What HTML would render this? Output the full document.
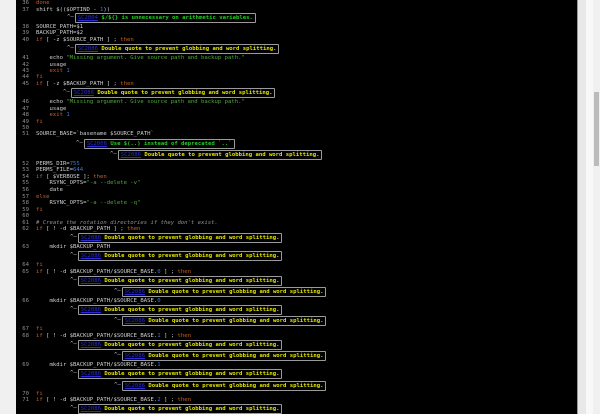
<!DOCTYPE html>
<html><head><meta charset="utf-8"><style>
body{margin:0;width:600px;height:414px;overflow:hidden;background:#f0f0f0;position:relative;font-family:"DejaVu Sans Mono","Liberation Mono",monospace;}
#panel{position:absolute;left:16px;top:0;width:561px;height:414px;background:#000;}
#b1{position:absolute;left:577px;top:0;width:1px;height:414px;background:#999;}
#b2{position:absolute;left:578px;top:0;width:8px;height:414px;background:#e8e8e8;}
#b3{position:absolute;left:586px;top:0;width:7px;height:414px;background:#f8f8f8;}
#sb{position:absolute;left:593px;top:0;width:7px;height:414px;background:#f0f0f0;}
#th{position:absolute;left:594px;top:92px;width:5px;height:74px;background:#bbb;}
.l{position:absolute;left:0;height:7px;line-height:7px;font-size:5.6px;white-space:pre;color:#d0d0d0;}
.n{position:absolute;left:16px;width:13px;text-align:right;color:#909090;}
.c{position:absolute;left:36px;}
.k{color:#c0602a}.s{color:#4ea83a}.d{color:#3a7ad0}.cm{color:#909090;font-style:italic}
.a{position:absolute;height:10px;line-height:9px;font-size:5.6px;white-space:pre;color:#ccc;}
.bx{display:inline-block;border:1px solid #9a9a9a;border-radius:1px;padding:0 2px;font-weight:bold;color:#e6e600;height:8px;line-height:8px;vertical-align:top;margin-left:1px}
.g{color:#22cc22}
.sc{color:#2a2ad8;text-decoration:underline;font-weight:normal}
</style></head><body>
<div id="panel"></div><div id="b1"></div><div id="b2"></div><div id="b3"></div><div id="sb"></div><div id="th"></div>

<div class="l" style="top:0px"><span class="n">36</span><span class="c"><span class="k">done</span></span></div>
<div class="l" style="top:7px"><span class="n">37</span><span class="c">shift $(($OPTIND - <span class="d">1</span>))</span></div>
<div class="a" style="left:67px;top:13px">^—<span class="bx g"><span class="sc">SC2004</span> $/${} is unnecessary on arithmetic variables.</span></div>
<div class="l" style="top:24px"><span class="n">38</span><span class="c">SOURCE_PATH=$1</span></div>
<div class="l" style="top:30px"><span class="n">39</span><span class="c">BACKUP_PATH=$2</span></div>
<div class="l" style="top:37px"><span class="n">40</span><span class="c"><span class="k">if</span> [ -z $SOURCE_PATH ] ; <span class="k">then</span></span></div>
<div class="a" style="left:67px;top:44px">^—<span class="bx"><span class="sc">SC2086</span> Double quote to prevent globbing and word splitting.</span></div>
<div class="l" style="top:55px"><span class="n">41</span><span class="c">    echo <span class="s">"Missing argument. Give source path and backup path."</span></span></div>
<div class="l" style="top:62px"><span class="n">42</span><span class="c">    usage</span></div>
<div class="l" style="top:68px"><span class="n">43</span><span class="c">    <span class="k">exit</span> <span class="d">1</span></span></div>
<div class="l" style="top:74px"><span class="n">44</span><span class="c"><span class="k">fi</span></span></div>
<div class="l" style="top:81px"><span class="n">45</span><span class="c"><span class="k">if</span> [ -z $BACKUP_PATH ] ; <span class="k">then</span></span></div>
<div class="a" style="left:63px;top:88px">^—<span class="bx"><span class="sc">SC2086</span> Double quote to prevent globbing and word splitting.</span></div>
<div class="l" style="top:99px"><span class="n">46</span><span class="c">    echo <span class="s">"Missing argument. Give source path and backup path."</span></span></div>
<div class="l" style="top:106px"><span class="n">47</span><span class="c">    usage</span></div>
<div class="l" style="top:112px"><span class="n">48</span><span class="c">    <span class="k">exit</span> <span class="d">1</span></span></div>
<div class="l" style="top:119px"><span class="n">49</span><span class="c"><span class="k">fi</span></span></div>
<div class="l" style="top:125px"><span class="n">50</span><span class="c"></span></div>
<div class="l" style="top:131px"><span class="n">51</span><span class="c">SOURCE_BASE=`basename $SOURCE_PATH`</span></div>
<div class="a" style="left:76px;top:139px">^—<span class="bx g"><span class="sc">SC2006</span> Use $(..) instead of deprecated `..`</span></div>
<div class="a" style="left:110px;top:150px">^—<span class="bx"><span class="sc">SC2086</span> Double quote to prevent globbing and word splitting.</span></div>
<div class="l" style="top:161px"><span class="n">52</span><span class="c">PERMS_DIR=<span class="d">755</span></span></div>
<div class="l" style="top:167px"><span class="n">53</span><span class="c">PERMS_FILE=<span class="d">644</span></span></div>
<div class="l" style="top:174px"><span class="n">54</span><span class="c"><span class="k">if</span> [ $VERBOSE ]; <span class="k">then</span></span></div>
<div class="l" style="top:180px"><span class="n">55</span><span class="c">    RSYNC_OPTS=<span class="s">"-a --delete -v"</span></span></div>
<div class="l" style="top:187px"><span class="n">56</span><span class="c">    date</span></div>
<div class="l" style="top:194px"><span class="n">57</span><span class="c"><span class="k">else</span></span></div>
<div class="l" style="top:200px"><span class="n">58</span><span class="c">    RSYNC_OPTS=<span class="s">"-a --delete -q"</span></span></div>
<div class="l" style="top:207px"><span class="n">59</span><span class="c"><span class="k">fi</span></span></div>
<div class="l" style="top:213px"><span class="n">60</span><span class="c"></span></div>
<div class="l" style="top:220px"><span class="n">61</span><span class="c"><span class="cm"># Create the rotation directories if they don't exist.</span></span></div>
<div class="l" style="top:226px"><span class="n">62</span><span class="c"><span class="k">if</span> [ ! -d $BACKUP_PATH ] ; <span class="k">then</span></span></div>
<div class="a" style="left:70px;top:233px">^—<span class="bx"><span class="sc">SC2086</span> Double quote to prevent globbing and word splitting.</span></div>
<div class="l" style="top:244px"><span class="n">63</span><span class="c">    mkdir $BACKUP_PATH</span></div>
<div class="a" style="left:70px;top:251px">^—<span class="bx"><span class="sc">SC2086</span> Double quote to prevent globbing and word splitting.</span></div>
<div class="l" style="top:262px"><span class="n">64</span><span class="c"><span class="k">fi</span></span></div>
<div class="l" style="top:269px"><span class="n">65</span><span class="c"><span class="k">if</span> [ ! -d $BACKUP_PATH/$SOURCE_BASE.<span class="d">0</span> ] ; <span class="k">then</span></span></div>
<div class="a" style="left:70px;top:276px">^—<span class="bx"><span class="sc">SC2086</span> Double quote to prevent globbing and word splitting.</span></div>
<div class="a" style="left:114px;top:287px">^—<span class="bx"><span class="sc">SC2086</span> Double quote to prevent globbing and word splitting.</span></div>
<div class="l" style="top:298px"><span class="n">66</span><span class="c">    mkdir $BACKUP_PATH/$SOURCE_BASE.<span class="d">0</span></span></div>
<div class="a" style="left:70px;top:305px">^—<span class="bx"><span class="sc">SC2086</span> Double quote to prevent globbing and word splitting.</span></div>
<div class="a" style="left:114px;top:316px">^—<span class="bx"><span class="sc">SC2086</span> Double quote to prevent globbing and word splitting.</span></div>
<div class="l" style="top:326px"><span class="n">67</span><span class="c"><span class="k">fi</span></span></div>
<div class="l" style="top:333px"><span class="n">68</span><span class="c"><span class="k">if</span> [ ! -d $BACKUP_PATH/$SOURCE_BASE.<span class="d">1</span> ] ; <span class="k">then</span></span></div>
<div class="a" style="left:70px;top:340px">^—<span class="bx"><span class="sc">SC2086</span> Double quote to prevent globbing and word splitting.</span></div>
<div class="a" style="left:114px;top:351px">^—<span class="bx"><span class="sc">SC2086</span> Double quote to prevent globbing and word splitting.</span></div>
<div class="l" style="top:362px"><span class="n">69</span><span class="c">    mkdir $BACKUP_PATH/$SOURCE_BASE.<span class="d">1</span></span></div>
<div class="a" style="left:70px;top:369px">^—<span class="bx"><span class="sc">SC2086</span> Double quote to prevent globbing and word splitting.</span></div>
<div class="a" style="left:114px;top:381px">^—<span class="bx"><span class="sc">SC2086</span> Double quote to prevent globbing and word splitting.</span></div>
<div class="l" style="top:391px"><span class="n">70</span><span class="c"><span class="k">fi</span></span></div>
<div class="l" style="top:397px"><span class="n">71</span><span class="c"><span class="k">if</span> [ ! -d $BACKUP_PATH/$SOURCE_BASE.<span class="d">2</span> ] ; <span class="k">then</span></span></div>
<div class="a" style="left:70px;top:404px">^—<span class="bx"><span class="sc">SC2086</span> Double quote to prevent globbing and word splitting.</span></div>
</body></html>
